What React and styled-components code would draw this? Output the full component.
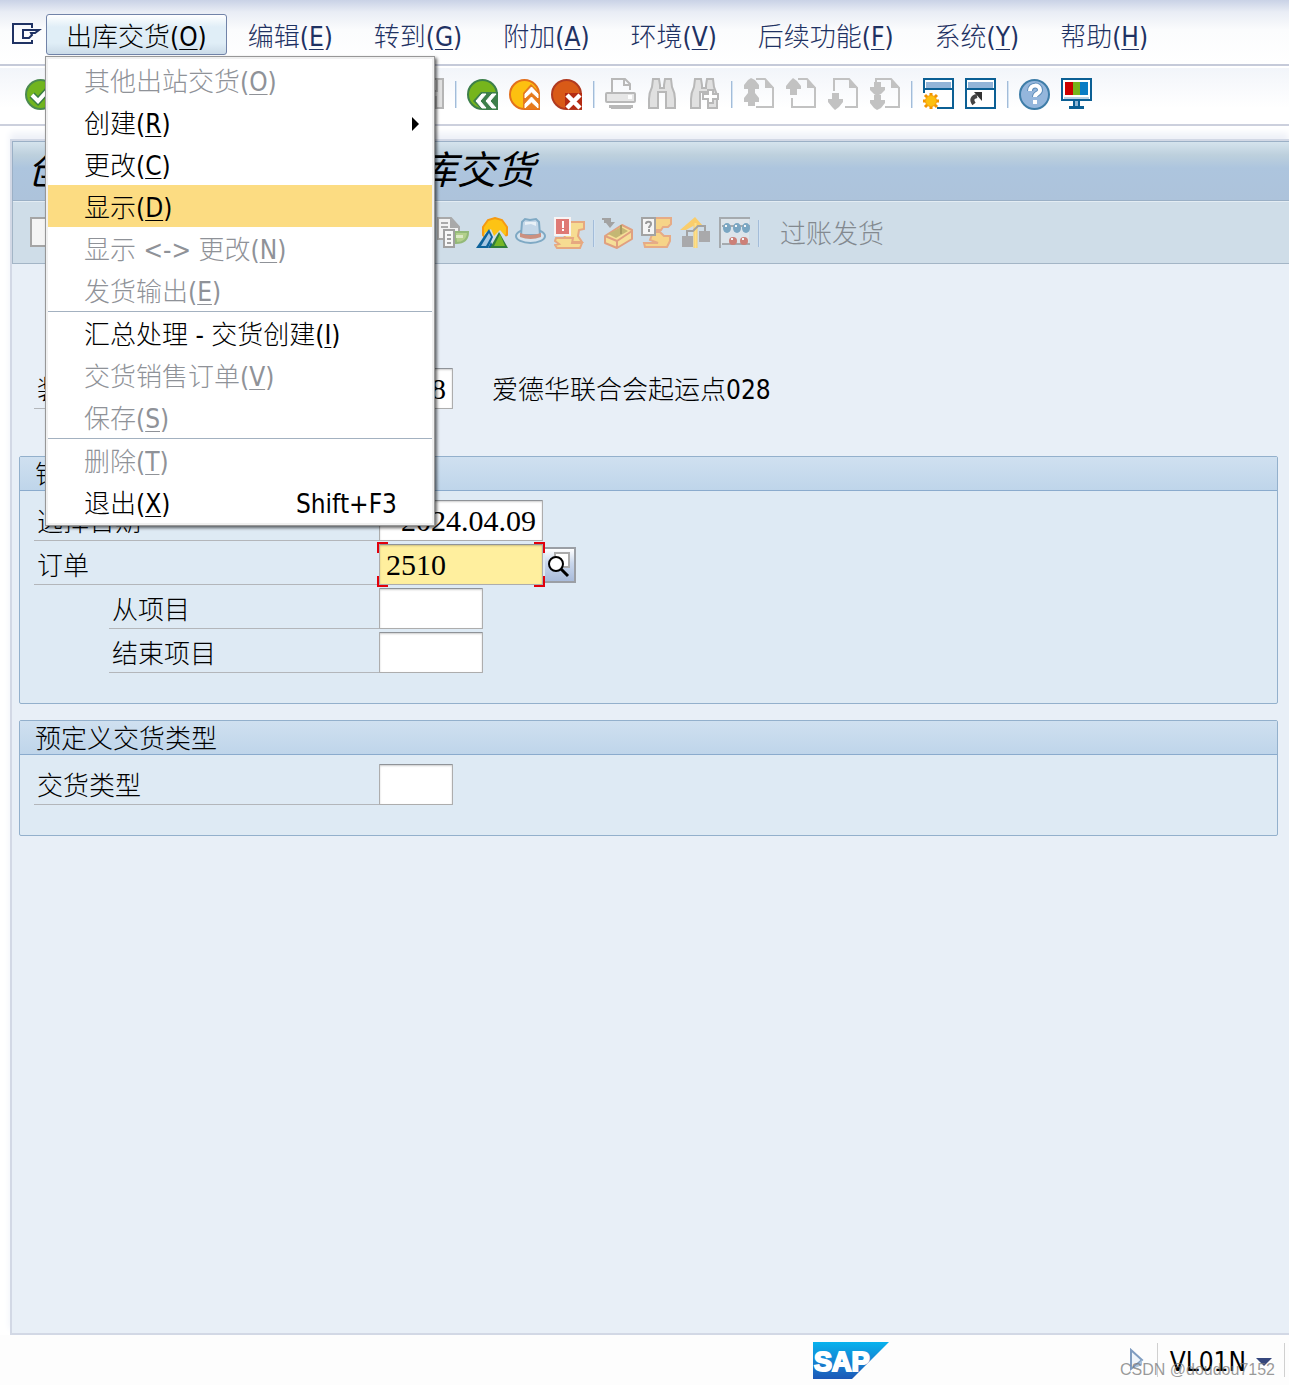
import styled, { createGlobalStyle, css } from 'styled-components';

const MENUS = [
  ['编辑', 'E'],
  ['转到', 'G'],
  ['附加', 'A'],
  ['环境', 'V'],
  ['后续功能', 'F'],
  ['系统', 'Y'],
  ['帮助', 'H'],
];

const DELIVERY_MENU = [
  [
    { text: '其他出站交货', hotkey: 'O', disabled: true },
    { text: '创建', hotkey: 'R', submenu: true },
    { text: '更改', hotkey: 'C' },
    { text: '显示', hotkey: 'D', active: true },
    { text: '显示 <-> 更改', hotkey: 'N', disabled: true },
    { text: '发货输出', hotkey: 'E', disabled: true },
  ],
  [
    { text: '汇总处理 - 交货创建', hotkey: 'I' },
    { text: '交货销售订单', hotkey: 'V', disabled: true },
    { text: '保存', hotkey: 'S', disabled: true },
  ],
  [
    { text: '删除', hotkey: 'T', disabled: true },
    { text: '退出', hotkey: 'X', shortcut: 'Shift+F3' },
  ],
];

function Label({ text, hotkey }) {
  return (
    <span>
      {text}(<u>{hotkey}</u>)
    </span>
  );
}

/* ---------- icons ---------- */

function Icon({ children }) {
  return (
    <svg width="32" height="32" viewBox="0 0 32 32" fill="none" aria-hidden="true">
      {children}
    </svg>
  );
}

const SessionIcon = () => (
  <svg width="30" height="22" viewBox="0 0 30 22" fill="none" stroke="#1f3263" strokeWidth="2" aria-hidden="true">
    <path d="M20 5V1H1v19h19v-3" />
    <path d="M11 7h16l-4 3h-4l1 2-3 3h-6z" />
  </svg>
);

const CheckIcon = () => (
  <Icon>
    <circle cx="15.5" cy="16.5" r="14.5" fill="#71b51f" stroke="#4b8a50" strokeWidth="2" />
    <path d="M7 17l6 6L24 11" stroke="#397d44" strokeWidth="7" />
    <path d="M7 17l6 6L24 11" stroke="#fff" strokeWidth="4" />
  </Icon>
);

const SaveIcon = () => (
  <Icon>
    <path d="M1 1h29v29H5l-4-4z" fill="#e0e0e0" stroke="#b5b5b5" strokeWidth="2" />
    <path d="M7 1h17v12H7zM9 19h14v11H9z" fill="#f2f2f2" stroke="#b5b5b5" strokeWidth="2" />
  </Icon>
);

const BADGE = 'M15.5 2a14.5 14.5 0 1 0 0 29H30V16.500A14.5 14.5 0 0 0 15.5 2z';

const BackIcon = () => (
  <Icon>
    <path d={BADGE} fill="#76b51c" stroke="#3d7f4a" strokeWidth="2" />
    <path d="M6 23l8-9h17v17H14z" fill="#3d7f4a" />
    <path d="M19 16h-4l-6 7 6 7h4l-6-7zM29 16h-4l-6 7 6 7h4l-6-7z" fill="#fff" stroke="#fff" />
  </Icon>
);

const ExitIcon = () => (
  <Icon>
    <path d={BADGE} fill="#fdc010" stroke="#e2701c" strokeWidth="2" />
    <path d="M14 31V15l8-9 9 9v16z" fill="#e67a1d" />
    <path d="M16 20v-4l6.500-7 6.500 7v4l-6.500-6zM16 30v-4l6.500-7 6.500 7v4l-6.500-6z" fill="#fff" stroke="#fff" />
  </Icon>
);

const CancelIcon = () => (
  <Icon>
    <path d={BADGE} fill="#d95a17" stroke="#b03a20" strokeWidth="2" />
    <path d="M14 15h17v16H14z" fill="#b42b12" />
    <path d="M16 17l13 13M29 17L16 30" stroke="#fff" strokeWidth="4.500" />
  </Icon>
);

const PrintIcon = () => (
  <Icon>
    <path d="M7 14V1h13l5 5v6M19 2v5h5" stroke="#b8b8b8" strokeWidth="2" />
    <rect x="1" y="15" width="29" height="9" rx="1" fill="#e6e6e6" stroke="#b8b8b8" strokeWidth="2" />
    <path d="M23 17h4v4h-4z" fill="#fff" />
    <path d="M4 27h24v3h-2v1H6v-1H4z" fill="#b8b8b8" />
  </Icon>
);

const Binoculars = () => (
  <path
    d="M6 1h6l1 6v3h4V7l1-6h6l1 8c2 4 3 7 3 12v9h-9V14h-8v16H2v-9c0-5 1-8 3-12z"
    fill="#e0e0e0"
    stroke="#b8b8b8"
    strokeWidth="2"
  />
);

const FindIcon = () => (
  <Icon>
    <Binoculars />
  </Icon>
);

const FindNextIcon = () => (
  <Icon>
    <Binoculars />
    <path d="M19 12h5v4h5v5h-5v4h-5v-4h-5v-5h5z" fill="#fff" stroke="#b8b8b8" strokeWidth="2" />
  </Icon>
);

const UP = 'M8 0l4 3 4 5v3h-4v6H5v-6H1V8l4-5z';
const DOWN = 'M8 32l4-3 4-5v-3h-4v-6H5v6H1v3l4 5z';

function PageIcon({ outline, arrows }) {
  return (
    <Icon>
      <path d={outline} stroke="#c2c2c2" strokeWidth="2" />
      <path d="M22 1v9h9z" fill="#c2c2c2" />
      {arrows.map((d) => (
        <path key={d} d={d} fill="#c2c2c2" />
      ))}
    </Icon>
  );
}

const FirstPageIcon = () => (
  <PageIcon
    outline="M13 1h9l8 9v19H13"
    arrows={['M8 0l4 2 4 5v4h-4v4H5v-4H1V7l4-5z', 'M8 13l4 2 4 5v4h-4v4H5v-4H1v-4l4-5z']}
  />
);
const PrevPageIcon = () => <PageIcon outline="M13 1h9l8 9v19H7v-9" arrows={[UP]} />;
const NextPageIcon = () => <PageIcon outline="M7 13V1h15l8 9v19H18" arrows={[DOWN]} />;
const LastPageIcon = () => (
  <PageIcon
    outline="M7 5V1h15l8 9v19H16"
    arrows={['M8 18l4-2 4-4V9h-4V4H5v5H1v3l4 4z', 'M8 32l4-2 4-5v-3h-4v-5H5v5H1v3l4 5z']}
  />
);

const NewSessionIcon = () => (
  <Icon>
    <path d="M1 1h29v29H1z" fill="#fff" stroke="#0b5f94" strokeWidth="2" />
    <path d="M3 4h25v6H3z" fill="#92b4d8" />
    <path d="M1 11h29" stroke="#0b5f94" strokeWidth="2" />
    <path d="M0 15h14v17H0z" fill="#fff" />
    <path d="M8 15v16M0 23h16M2 17l12 12M14 17L2 29" stroke="#f29400" strokeWidth="3" />
    <circle cx="8" cy="23" r="5.500" fill="#fdc010" stroke="#f6a30c" />
  </Icon>
);

const ShortcutIcon = () => (
  <Icon>
    <path d="M1 1h29v29H1z" fill="#fff" stroke="#0b5f94" strokeWidth="2" />
    <path d="M3 4h25v6H3z" fill="#92b4d8" />
    <path d="M1 11h29" stroke="#0b5f94" strokeWidth="2" />
    <path d="M9 26c-3-4-2-7 3-8" stroke="#444" strokeWidth="4" />
    <path d="M9 14h8v9z" fill="#333" />
  </Icon>
);

const HelpIcon = () => (
  <Icon>
    <circle cx="15.500" cy="16.500" r="14.500" fill="#94b6dc" stroke="#3e7da8" strokeWidth="2" />
    <path d="M11 13c0-7 10-7 10-1 0 4-5 3-5 7" stroke="#5c8cb8" strokeWidth="6" />
    <path d="M11 13c0-7 10-7 10-1 0 4-5 3-5 7M16 22v4" stroke="#fff" strokeWidth="4" />
  </Icon>
);

const MonitorIcon = () => (
  <Icon>
    <path d="M1 1h29v21H1z" fill="#fff" stroke="#0b5f94" strokeWidth="2" />
    <path d="M4 4h8v13H4z" fill="#c00" />
    <path d="M12 4h7v13h-7z" fill="#76b41b" />
    <path d="M19 4h8v13h-8z" fill="#0a7cc4" />
    <path d="M3 19h25v2H3z" fill="#b8d0e4" />
    <path d="M12 22h7v6h4v3H8v-3h4z" fill="#0b5f94" />
    <path d="M14 23h3v5h-3z" fill="#8fb5d4" />
  </Icon>
);

const NewDocIcon = () => (
  <Icon>
    <path d="M2 1h17l8 8v20H2z" fill="#f4f4f4" stroke="#a5a5a5" strokeWidth="2" />
    <path d="M18 1v9h9z" fill="#a5a5a5" />
  </Icon>
);

const DocFlowIcon = () => (
  <Icon>
    <path d="M1 1h13l8 9v12H1z" fill="#f2f2f2" stroke="#a9a9a9" strokeWidth="2" />
    <path d="M13 1l10 10H13zM4 5h7v2H4zM4 9h7v2H4z" fill="#a9a9a9" />
    <path d="M18 15h13c0 7-4 11-12 11z" fill="#b3d08c" stroke="#93b978" strokeWidth="2" />
    <path d="M19 18h7v3h-7z" fill="#dbe8c6" />
    <path d="M7 13h10v17H7z" fill="#f7f7f7" stroke="#a0a0a0" strokeWidth="2" />
    <path d="M10 17h4v2h-4zM10 21h4v2h-4zM10 25h4v2h-4z" fill="#a0a0a0" />
  </Icon>
);

const MountainIcon = () => (
  <Icon>
    <path d="M7 18V10l5-7 7-2 7 2 5 7v8l-4 2H9z" fill="#fdc314" stroke="#f59a12" strokeWidth="2" />
    <path d="M9 16l6-4 3 7 6-6 7 8v9H5z" fill="#cfdde8" />
    <path d="M0 31L13 12l4 8-5 11z" fill="#0e639b" />
    <path d="M5 29l8-13 2 4-5 9z" fill="#a7c8e4" />
    <path d="M12 31l3-6 3 6z" fill="#0e639b" />
    <path d="M14 31l9-16 9 16z" fill="#2f7d3a" />
    <path d="M18 29l6-12 5 12z" fill="#76b726" />
  </Icon>
);

const HatIcon = () => (
  <Icon>
    <ellipse cx="15.500" cy="19" rx="14.500" ry="7" fill="#d6e3ee" stroke="#7fa9c4" strokeWidth="2" />
    <path d="M6 18l1-13 3-3 5 1 6-1 3 3 1 13z" fill="#c4d7e8" stroke="#7fa9c4" strokeWidth="2" />
    <path d="M10 5h11v4l-5-2-6 1z" fill="#e9f1f7" />
    <path d="M5 16q10.500 4 21 0v4q-10.500 4-21 0z" fill="#cc9080" />
  </Icon>
);

const LogIcon = () => (
  <Icon>
    <g fill="#f6dc92" stroke="#e6a880" strokeWidth="2">
      <path d="M12 5h18v7l-5 1-1 6 4 6H9c3-6 2-12 3-20z" />
      <path d="M2 21h17l-1 5h10l-2 5H3l-2-3 4-1-4-3z" />
    </g>
    <path d="M0 0h17v19H0z" fill="#f8f4f4" />
    <path d="M2 2h13v15H2z" fill="#df7975" />
    <path d="M8 4h2v7H8zM8 12h2v2H8z" fill="#fff" />
  </Icon>
);

const PackIcon = () => (
  <Icon>
    <g stroke="#e0a080" strokeWidth="2" strokeLinejoin="round">
      <path d="M3 19L20 8l10 5v9l-15 9-12-5z" fill="#f6df98" />
      <path d="M3 19l12 5 15-10M15 24v6" />
    </g>
    <path d="M6 17l13-7 7 4-12 7z" fill="#c4b774" />
    <path d="M0 1h9v4h4l-5 6-4-5H2V3H0z" fill="#a2a2a2" />
    <path d="M19 8v9" stroke="#a79a62" strokeWidth="2" />
  </Icon>
);

const QueryIcon = () => (
  <Icon>
    <g fill="#f6d488" stroke="#e6ab86" strokeWidth="2">
      <path d="M13 1h17v6l-3 3h-5l-2 3h-7z" />
      <path d="M12 15h7l4 4h6v5l-3 6H4l-1-4h14l-8-3z" />
    </g>
    <path d="M1 1h13v17H1z" fill="#f5f5f5" stroke="#a3a3a3" strokeWidth="2" />
    <path d="M5 7c0-3 5-3 5 0 0 2-2 2-2 4M8 12v3" stroke="#999" strokeWidth="2" />
  </Icon>
);

const WeighIcon = () => (
  <Icon>
    <path d="M0 13L15 0l9 10-9-2-9 5z" fill="#f9cd6c" />
    <path d="M15.500 4v27" stroke="#f9cd6c" strokeWidth="4" />
    <path d="M15.500 6v25" stroke="#fbe08c" strokeWidth="2" />
    <path d="M7 19v-5h6l5-5h7v6" stroke="#a3a3a3" strokeWidth="2" />
    <path d="M2 19h11v11H2zM19 14h11v11H19z" fill="#a9a9ab" />
  </Icon>
);

const AbacusIcon = () => (
  <Icon>
    <path d="M2 2h28v26H2z" fill="#dce4ea" />
    <path d="M1 31V1h30M3 27h28M3 9h28" stroke="#a5aaae" strokeWidth="2" />
    <g fill="#7aa6c2">
      <ellipse cx="8" cy="11" rx="4" ry="5" />
      <ellipse cx="18" cy="11" rx="4" ry="5" />
      <ellipse cx="27" cy="11" rx="4" ry="5" />
    </g>
    <circle cx="14" cy="24" r="4" fill="#cc8078" />
    <circle cx="25" cy="24" r="4" fill="#cc8078" />
    <path d="M6 8h2v2H6zM16 8h2v2h-2zM25 8h2v2h-2zM12 21h2v2h-2zM23 21h2v2h-2z" fill="#f2f5f7" />
  </Icon>
);

const SearchHelpIcon = () => (
  <svg width="26" height="28" viewBox="0 0 26 28" fill="none" aria-hidden="true">
    <path d="M8 2h14v14H8z" fill="#fff" stroke="#aaa" strokeWidth="2" />
    <circle cx="9" cy="13" r="7" fill="#fff" stroke="#000" strokeWidth="2" />
    <path d="M14 18l7 7" stroke="#000" strokeWidth="3" />
  </svg>
);

const SapLogo = () => (
  <svg width="76" height="37" viewBox="0 0 76 37" role="img" aria-label="SAP">
    <defs>
      <linearGradient id="sap" x1="0" y1="0" x2="0" y2="1">
        <stop offset="0" stopColor="#07b3ee" />
        <stop offset="0.500" stopColor="#1585d3" />
        <stop offset="1" stopColor="#1d58b7" />
      </linearGradient>
    </defs>
    <path d="M0 0h76L39 37H0z" fill="url(#sap)" />
    <text
      x="1"
      y="29"
      fill="#fff"
      stroke="#fff"
      strokeWidth="2"
      fontFamily="Liberation Sans, sans-serif"
      fontSize="27"
      fontWeight="700"
    >
      SAP
    </text>
  </svg>
);

const STANDARD_TOOLS = [
  [SaveIcon, '保存'],
  null,
  [BackIcon, '返回'],
  [ExitIcon, '退出'],
  [CancelIcon, '取消'],
  null,
  [PrintIcon, '打印'],
  [FindIcon, '查找'],
  [FindNextIcon, '继续查找'],
  null,
  [FirstPageIcon, '第一页'],
  [PrevPageIcon, '上一页'],
  [NextPageIcon, '下一页'],
  [LastPageIcon, '最后一页'],
  null,
  [NewSessionIcon, '创建新会话'],
  [ShortcutIcon, '生成快捷方式'],
  null,
  [HelpIcon, '帮助'],
  [MonitorIcon, '定制本地布局'],
];

const APP_TOOLS = [
  [NewDocIcon, '创建'],
  [NewDocIcon, '更改'],
  [NewDocIcon, '显示'],
  null,
  [NewDocIcon, '抬头'],
  [NewDocIcon, '项目'],
  [NewDocIcon, '拣配'],
  [NewDocIcon, '装载'],
  null,
  [NewDocIcon, '运输'],
  [NewDocIcon, '状态'],
  [NewDocIcon, '合作伙伴'],
  [DocFlowIcon, '凭证流'],
  [MountainIcon, '抬头总览'],
  [HatIcon, '抬头明细'],
  [LogIcon, '错误日志'],
  null,
  [PackIcon, '包装'],
  [QueryIcon, '不完整性'],
  [WeighIcon, '可用性'],
  [AbacusIcon, '批次拆分'],
  null,
];

function Tools({ items }) {
  return items.map((item, i) => {
    if (!item) return <Separator key={i} />;
    const [Glyph, name] = item;
    return (
      <ToolButton key={i} type="button" aria-label={name}>
        <Glyph />
      </ToolButton>
    );
  });
}

export default function App() {
  return (
    <Window>
      <GlobalStyle />

      <MenuBar>
        <SessionButton type="button" aria-label="会话">
          <SessionIcon />
        </SessionButton>
        <MenuHolder>
          <MenuButton type="button" $open aria-expanded="true">
            <Label text="出库交货" hotkey="O" />
          </MenuButton>
          <DropDown>
            {DELIVERY_MENU.map((group, i) => (
              <MenuGroup key={i}>
                {group.map((entry) => (
                  <li key={entry.hotkey}>
                    <MenuEntry type="button" disabled={entry.disabled} $active={entry.active}>
                      <Label text={entry.text} hotkey={entry.hotkey} />
                      {entry.shortcut && <Shortcut>{entry.shortcut}</Shortcut>}
                      {entry.submenu && <SubmenuArrow />}
                    </MenuEntry>
                  </li>
                ))}
              </MenuGroup>
            ))}
          </DropDown>
        </MenuHolder>
        {MENUS.map(([text, hotkey]) => (
          <MenuButton key={hotkey} type="button">
            <Label text={text} hotkey={hotkey} />
          </MenuButton>
        ))}
      </MenuBar>

      <StandardToolbar>
        <ToolButton type="button" aria-label="回车">
          <CheckIcon />
        </ToolButton>
        <CommandField aria-label="命令" />
        <Tools items={STANDARD_TOOLS} />
      </StandardToolbar>

      <Frame>
        <TitleBar>
          <Title>创建具有订单参照的出库交货</Title>
        </TitleBar>
        <AppToolbar>
          <Tools items={APP_TOOLS} />
          <PostButton type="button">过账发货</PostButton>
        </AppToolbar>

        <Content>
          <ShippingRow>
            <FieldLabel htmlFor="point">装运点</FieldLabel>
            <Field id="point" defaultValue="1028" $width={74} />
            <FieldText>爱德华联合会起运点028</FieldText>
          </ShippingRow>

          <Group>
            <GroupTitle>销售订单数据</GroupTitle>
            <GroupBody>
              <Row>
                <FieldLabel htmlFor="date">选择日期</FieldLabel>
                <Field id="date" defaultValue="2024.04.09" $width={164} $right />
              </Row>
              <Row>
                <FieldLabel htmlFor="order">订单</FieldLabel>
                <FocusFrame>
                  <Field id="order" defaultValue="2510" $width={164} $focused />
                </FocusFrame>
                <SearchHelp type="button" aria-label="搜索帮助">
                  <SearchHelpIcon />
                </SearchHelp>
              </Row>
              <Row>
                <FieldLabel htmlFor="from" $indent>
                  从项目
                </FieldLabel>
                <Field id="from" $width={104} />
              </Row>
              <Row>
                <FieldLabel htmlFor="to" $indent>
                  结束项目
                </FieldLabel>
                <Field id="to" $width={104} />
              </Row>
            </GroupBody>
          </Group>

          <Group>
            <GroupTitle>预定义交货类型</GroupTitle>
            <GroupBody>
              <Row>
                <FieldLabel htmlFor="type">交货类型</FieldLabel>
                <Field id="type" $width={74} />
              </Row>
            </GroupBody>
          </Group>
        </Content>
      </Frame>

      <StatusBar>
        <SapLogo />
        <StatusInfo>
          <ExpandButton type="button" aria-label="展开状态栏">
            <svg width="16" height="24" viewBox="0 0 16 24" fill="none" aria-hidden="true">
              <path d="M2 2l11 10L2 21z" fill="#eef4fa" stroke="#7f9cc0" strokeWidth="2" />
              <path d="M4 21l9-9v5z" fill="#a9c3dc" />
            </svg>
          </ExpandButton>
          <StatusLine />
          <Transaction type="button">
            VL01N
            <DownArrow />
          </Transaction>
          <StatusLine />
        </StatusInfo>
        <Watermark>CSDN @doudou7152</Watermark>
      </StatusBar>
    </Window>
  );
}

const GlobalStyle = createGlobalStyle`
  * {
    box-sizing: border-box;
  }

  body {
    margin: 0;
    background: #fff;
  }

  body,
  button,
  input {
    font-family: 'DejaVu Sans Condensed', 'Noto Sans CJK SC', sans-serif;
    font-size: 26px;
    font-weight: 300;
    line-height: 32px;
  }

  button {
    padding: 0;
    border: 0;
    background: none;
    color: inherit;
    white-space: nowrap;
  }

  svg {
    display: block;
  }

  u {
    text-decoration-thickness: 1px;
    text-underline-offset: 3px;
  }
`;

const Window = styled.div`
  display: flex;
  flex-direction: column;
  min-height: 100vh;
  overflow-x: hidden;
  color: #000;
`;

const MenuBar = styled.nav`
  display: flex;
  align-items: flex-start;
  gap: 1px;
  height: 66px;
  padding: 14px 0 0 12px;
  border-bottom: 2px solid #c5cad9;
  background: linear-gradient(#c9d2e6, #e9edf5 12px, #fbfcfd 30px, #fff);
  color: #1f3263;
`;

const SessionButton = styled.button`
  width: 33px;
  padding-top: 9px;
`;

const MenuHolder = styled.div`
  position: relative;
`;

const MenuButton = styled.button`
  height: 41px;
  padding: 5px 19px 0;
  border: 1px solid transparent;
  border-radius: 3px;

  ${({ $open }) =>
    $open &&
    css`
      border-color: #7183a8;
      background: linear-gradient(#fff, #e0eef7 12px, #e0eef7 28px, #cbdbe8);
      color: #000;
    `}
`;

const DropDown = styled.div`
  position: absolute;
  z-index: 2;
  top: 42px;
  left: -1px;
  width: 390px;
  padding: 2px;
  border: 1px solid #979797;
  background: #fff;
  box-shadow: inset 0 0 0 2px #f0f0f0, 2px 2px 3px rgba(0, 0, 0, 0.6);
  color: #000;
`;

const MenuGroup = styled.ul`
  margin: 0;
  padding: 0;
  list-style: none;

  & + & {
    border-top: 1px solid #a3b1c0;
  }
`;

const MenuEntry = styled.button`
  display: flex;
  align-items: center;
  justify-content: space-between;
  width: 100%;
  height: 42px;
  padding: 3px 35px 0 36px;
  background: ${({ $active }) => ($active ? '#fcdc82' : 'transparent')};

  &:disabled {
    color: #8f9298;
  }
`;

const Shortcut = styled.span`
  font-weight: 400;
`;

const SubmenuArrow = styled.span`
  margin-right: -22px;
  border: 7px solid transparent;
  border-right: 0;
  border-left-color: #000;
`;

const StandardToolbar = styled.div`
  display: flex;
  align-items: center;
  gap: 10px;
  height: 60px;
  padding: 0 0 4px 25px;
  border-top: 2px solid #fff;
  border-bottom: 2px solid #ccd0dd;
  background: linear-gradient(#f2f5fa, #fff 40px);
`;

const ToolButton = styled.button`
  flex: none;
  width: 32px;
  height: 32px;
`;

const CommandField = styled.input`
  width: 336px;
  height: 36px;
  border: 1px solid #9aa4ae;
  background: #fff;
`;

const Separator = styled.span`
  flex: none;
  width: 2px;
  height: 27px;
  border-left: 1px solid #a3bcd9;
  background: #d3e3f2;
`;

const Frame = styled.main`
  display: flex;
  flex: 1;
  flex-direction: column;
  margin-top: 13px;
  margin-left: 10px;
  border: solid #d2d8e5;
  border-width: 2px 0 2px 2px;
  background: #e8eff7;
  box-shadow: 0 -6px 7px #eef1f8;
`;

const TitleBar = styled.header`
  display: flex;
  align-items: center;
  height: 60px;
  padding-left: 15px;
  border: solid #9bb0c6;
  border-width: 1px 0 1px 1px;
  background: linear-gradient(#d5e3ed, #bdd0dd 13px, #adc5de 26px, #adc3db);
`;

const Title = styled.h1`
  margin: 0;
  font-size: 39px;
  font-style: italic;
  font-weight: 400;
  line-height: 48px;
  white-space: nowrap;
`;

const AppToolbar = styled.div`
  display: flex;
  align-items: center;
  gap: 7px;
  height: 63px;
  padding: 2px 0 0 16px;
  border: solid #a3b5c6;
  border-width: 0 0 1px 1px;
  background: #cfdde8;
  box-shadow: inset 0 1px #e3ecf3;
`;

const PostButton = styled.button`
  margin-left: 13px;
  padding-top: 2px;
  color: #83898f;
`;

const Content = styled.div`
  display: flex;
  flex-direction: column;
  gap: 16px;
  padding: 104px 11px 16px 7px;
`;

const Row = styled.div`
  display: flex;
  align-items: center;
  height: 41px;
`;

const ShippingRow = styled(Row)`
  margin-bottom: 31px;
  padding-left: 15px;
`;

const FieldLabel = styled.label`
  flex: none;
  width: ${({ $indent }) => ($indent ? '270px' : '345px')};
  height: 41px;
  margin-left: ${({ $indent }) => ($indent ? '75px' : '0')};
  padding: 6px 0 0 3px;
  border-bottom: 1px solid #b3b6ba;
`;

const Field = styled.input`
  flex: none;
  width: ${({ $width }) => $width}px;
  height: 41px;
  padding: 0 6px;
  border: 1px solid #adadad;
  border-top-color: #8f9398;
  border-radius: 1px;
  outline: 0;
  background: ${({ $focused }) => ($focused ? '#ffef9e' : '#fff')};
  box-shadow: inset 0 1px 2px rgba(0, 0, 0, 0.2);
  font-family: 'Liberation Serif', 'Noto Sans CJK SC', serif;
  font-size: 30px;
  font-weight: 400;
  text-align: ${({ $right }) => ($right ? 'right' : 'left')};
`;

const FieldText = styled.span`
  margin-left: 39px;
  padding-top: 3px;
`;

const corner = 'linear-gradient(#e2000b, #e2000b)';

const FocusFrame = styled.div`
  position: relative;

  &::after {
    position: absolute;
    inset: -2px;
    background:
      ${corner} 0 0 / 11px 2px,
      ${corner} 0 0 / 2px 11px,
      ${corner} 100% 0 / 11px 2px,
      ${corner} 100% 0 / 2px 11px,
      ${corner} 0 100% / 11px 2px,
      ${corner} 0 100% / 2px 11px,
      ${corner} 100% 100% / 11px 2px,
      ${corner} 100% 100% / 2px 11px;
    background-repeat: no-repeat;
    content: '';
    pointer-events: none;
  }
`;

const SearchHelp = styled.button`
  width: 31px;
  height: 36px;
  margin-left: 2px;
  padding: 2px;
  border: solid #9b9fa5;
  border-width: 2px 2px 2px 0;
  background: linear-gradient(#fff, #c9d7ec 14px, #a9bcdb);
`;

const Group = styled.section`
  border: 1px solid #93b0cc;
  border-radius: 2px;
  background: #deeaf4;
`;

const GroupTitle = styled.h2`
  height: 34px;
  margin: 0;
  padding: 2px 0 0 15px;
  border-bottom: 1px solid #8aabcd;
  background: linear-gradient(#cfe0f0, #bfd5ea);
  font-size: 26px;
  font-weight: 300;
  line-height: 32px;
`;

const GroupBody = styled.div`
  display: flex;
  flex-direction: column;
  gap: 3px;
  padding: 9px 14px 30px;
`;

const StatusBar = styled.footer`
  position: relative;
  display: flex;
  align-items: center;
  justify-content: flex-end;
  gap: 240px;
  height: 50px;
  padding-right: 4px;
  background: #fdfdfd;
`;

const StatusInfo = styled.div`
  display: flex;
  align-items: center;
  gap: 12px;
`;

const ExpandButton = styled.button`
  height: 24px;
`;

const StatusLine = styled.span`
  width: 1px;
  height: 34px;
  background: #d0d0d0;
`;

const Transaction = styled.button`
  display: flex;
  align-items: center;
  gap: 10px;
  padding-top: 4px;
`;

const DownArrow = styled.span`
  border: 8px solid transparent;
  border-top-color: #35477d;
  border-bottom: 0;
`;

const Watermark = styled.span`
  position: absolute;
  right: 14px;
  bottom: 5px;
  color: rgba(120, 120, 120, 0.75);
  font-family: 'Liberation Sans', sans-serif;
  font-size: 16px;
  font-weight: 400;
  line-height: 20px;
`;
